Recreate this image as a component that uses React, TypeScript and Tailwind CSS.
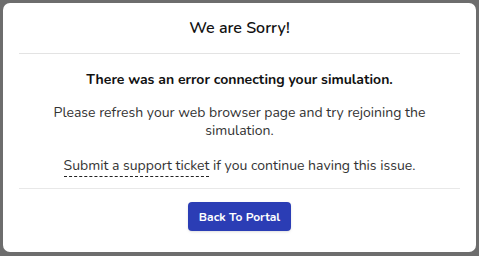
export default function App() {
  return (
    <div className="w-[479px] h-[256px] bg-[#6d6d6d] p-[3px] pb-[4px]" style={{ fontFamily: 'Nunito, Lato, "Noto Sans", sans-serif' }}>
      <div className="w-full h-full bg-white rounded-[7px] flex flex-col px-[16px]">
        <div className="h-[51px] shrink-0 flex items-center justify-center border-b border-[#e3e3e3] text-[16px] font-semibold text-[#111]">
          We are Sorry!
        </div>
        <div className="flex flex-col items-center text-center text-[14px] text-[#333] border-b border-[#e8e8e8] h-[135px] shrink-0">
          <p className="mt-[15px] font-bold text-[#111]">There was an error connecting your simulation.</p>
          <p className="mt-[14px] leading-[18px] px-[20px]">Please refresh your web browser page and try rejoining the simulation.</p>
          <p className="mt-[15px]">
            <span className="border-b border-dashed border-[#222] pb-[1px]">Submit a support ticket</span> if you continue having this issue.
          </p>
        </div>
        <div className="flex justify-center pt-[13px]">
          <button className="w-[103px] h-[29px] rounded-[4px] bg-[#2b3db5] text-white text-[12px] font-bold shadow-sm">
            Back To Portal
          </button>
        </div>
      </div>
    </div>
  );
}
